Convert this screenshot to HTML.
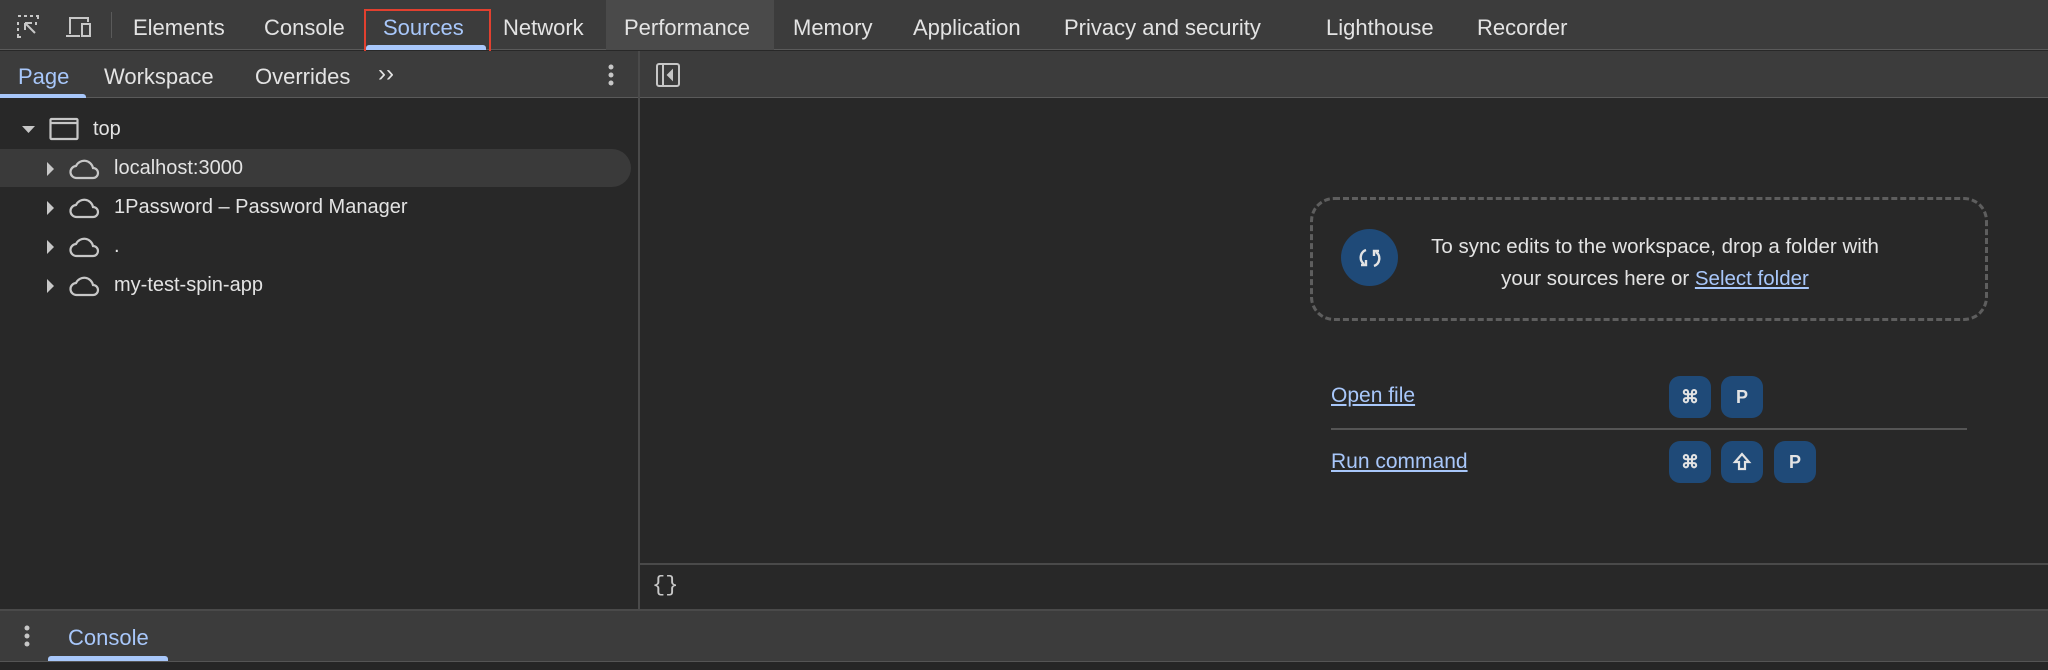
<!DOCTYPE html>
<html><head><meta charset="utf-8"><style>
*{margin:0;padding:0;box-sizing:border-box}
body{width:2048px;height:670px;background:#282828;font-family:"Liberation Sans",Arial,sans-serif;color:#e3e3e3;position:relative;overflow:hidden}
.a{position:absolute}
.tb{left:0;top:0;width:2048px;height:50px;background:#3c3c3c;border-bottom:1px solid #5a5a5a}
.t{position:absolute;top:15px;font-size:22px;color:#e3e3e3;white-space:nowrap}
.row{font-size:20px;white-space:nowrap}
.key{position:absolute;width:42px;height:42px;border-radius:11px;background:#1f4a78;color:#e3e3e3;font-size:18px;font-weight:bold;text-align:center;line-height:42px}
.lnk{color:#a8c7fa;text-decoration:underline;font-size:21px;position:absolute;white-space:nowrap}
</style></head><body>
<div class="a tb"></div>
<div class="a" style="left:606px;top:0;width:168px;height:50px;background:#4a4a4a"></div>
<svg class="a" style="left:16px;top:14px" width="26" height="26" viewBox="0 0 26 26" fill="none" stroke="#c7c7c7" stroke-width="2"><path d="M2 2h3M8 2h3M14 2h3M20 2h2v3M2 8v3M2 14v3M2 20v3h3M20 8v3M9 9l10 10M9 9h7M9 9v7"/></svg>
<svg class="a" style="left:64px;top:14px" width="30" height="26" viewBox="0 0 30 26" fill="none" stroke="#c7c7c7" stroke-width="2"><path d="M6 20V4h18v4M2 22h14M18 10h8v12h-8z"/></svg>
<div class="a" style="left:111px;top:12px;width:1px;height:26px;background:#5a5a5a"></div>
<div class="t" style="left:133px">Elements</div>
<div class="t" style="left:264px">Console</div>
<div class="t" style="left:383px;color:#a8c7fa">Sources</div>
<div class="a" style="left:366px;top:45px;width:120px;height:5px;border-radius:3px 3px 0 0;background:#a8c7fa"></div>
<div class="a" style="left:364px;top:9px;width:127px;height:47px;border:2px solid #e2402f"></div>
<div class="t" style="left:503px">Network</div>
<div class="t" style="left:624px">Performance</div>
<div class="t" style="left:793px">Memory</div>
<div class="t" style="left:913px">Application</div>
<div class="t" style="left:1064px">Privacy and security</div>
<div class="t" style="left:1326px">Lighthouse</div>
<div class="t" style="left:1477px">Recorder</div>

<div class="a" style="left:0;top:51px;width:2048px;height:47px;background:#3c3c3c;border-bottom:1px solid #5a5a5a"></div>
<div class="t" style="left:18px;top:64px;color:#a8c7fa">Page</div>
<div class="a" style="left:0;top:94px;width:86px;height:4px;background:#a8c7fa;border-radius:0 3px 0 0"></div>
<div class="t" style="left:104px;top:64px">Workspace</div>
<div class="t" style="left:255px;top:64px">Overrides</div>
<div class="t" style="left:378px;top:60px;font-size:24px">››</div>
<svg class="a" style="left:606px;top:63px" width="10" height="24"><circle cx="5" cy="4" r="2.5" fill="#c7c7c7"/><circle cx="5" cy="12" r="2.5" fill="#c7c7c7"/><circle cx="5" cy="20" r="2.5" fill="#c7c7c7"/></svg>
<div class="a" style="left:638px;top:51px;width:2px;height:558px;background:#4a4a4a"></div>
<svg class="a" style="left:655px;top:62px" width="26" height="26" viewBox="0 0 26 26" fill="none" stroke="#c7c7c7" stroke-width="2"><rect x="2" y="2" width="22" height="22" rx="2"/><path d="M8 2v22"/><path d="M17 9l-4 4 4 4z" fill="#c7c7c7"/></svg>

<!-- tree -->
<div class="a" style="left:0;top:149px;width:631px;height:38px;background:#3a3a3a;border-radius:0 19px 19px 0"></div>
<svg class="a" style="left:22px;top:124px" width="14" height="10"><path d="M0 2h13L6.5 9z" fill="#c7c7c7"/></svg>
<svg class="a" style="left:49px;top:117px" width="30" height="24" fill="none" stroke="#c7c7c7" stroke-width="2.2"><rect x="1.5" y="2" width="27" height="20" rx="1"/><path d="M1.5 6h27"/></svg>
<div class="a row" style="left:93px;top:118px">top</div>

<svg class="a" style="left:46px;top:161px" width="10" height="16"><path d="M1 1l7 7-7 7z" fill="#c7c7c7"/></svg>
<svg class="a" style="left:69px;top:156px" width="32" height="24" fill="none" stroke="#c7c7c7" stroke-width="2.2"><path d="M8 22a6 6 0 0 1-1-12 9 9 0 0 1 17 2 5 5 0 0 1 0 10z"/></svg>
<div class="a row" style="left:114px;top:157px">localhost:3000</div>

<svg class="a" style="left:46px;top:200px" width="10" height="16"><path d="M1 1l7 7-7 7z" fill="#c7c7c7"/></svg>
<svg class="a" style="left:69px;top:195px" width="32" height="24" fill="none" stroke="#c7c7c7" stroke-width="2.2"><path d="M8 22a6 6 0 0 1-1-12 9 9 0 0 1 17 2 5 5 0 0 1 0 10z"/></svg>
<div class="a row" style="left:114px;top:196px">1Password – Password Manager</div>

<svg class="a" style="left:46px;top:239px" width="10" height="16"><path d="M1 1l7 7-7 7z" fill="#c7c7c7"/></svg>
<svg class="a" style="left:69px;top:234px" width="32" height="24" fill="none" stroke="#c7c7c7" stroke-width="2.2"><path d="M8 22a6 6 0 0 1-1-12 9 9 0 0 1 17 2 5 5 0 0 1 0 10z"/></svg>
<div class="a row" style="left:114px;top:235px">.</div>

<svg class="a" style="left:46px;top:278px" width="10" height="16"><path d="M1 1l7 7-7 7z" fill="#c7c7c7"/></svg>
<svg class="a" style="left:69px;top:273px" width="32" height="24" fill="none" stroke="#c7c7c7" stroke-width="2.2"><path d="M8 22a6 6 0 0 1-1-12 9 9 0 0 1 17 2 5 5 0 0 1 0 10z"/></svg>
<div class="a row" style="left:114px;top:274px">my-test-spin-app</div>

<!-- right -->
<div class="a" style="left:1310px;top:197px;width:678px;height:124px;border:3px dashed #5e5e5e;border-radius:24px"></div>
<div class="a" style="left:1341px;top:229px;width:57px;height:57px;border-radius:50%;background:#1f4a78"></div>
<svg class="a" style="left:1357px;top:245px" width="26" height="26" viewBox="0 0 26 26" fill="none" stroke="#e3e3e3" stroke-width="2.4"><path d="M9 5a8 8 0 0 0-2 14M17 21a8 8 0 0 0 2-14"/><path d="M4 20h5v-5M22 6h-5v5"/></svg>
<div class="a" style="left:1405px;top:231px;width:500px;text-align:center;font-size:20.5px;line-height:32px">To sync edits to the workspace, drop a folder with<br>your sources here or <span style="color:#a8c7fa;text-decoration:underline">Select folder</span></div>
<div class="lnk" style="left:1331px;top:384px">Open file</div>
<div class="key" style="left:1669px;top:376px">⌘</div>
<div class="key" style="left:1721px;top:376px">P</div>
<div class="a" style="left:1331px;top:428px;width:636px;height:2px;background:#555"></div>
<div class="lnk" style="left:1331px;top:450px">Run command</div>
<div class="key" style="left:1669px;top:441px">⌘</div>
<div class="key" style="left:1721px;top:441px"><svg width="20" height="20" viewBox="0 0 20 20" style="margin-top:11px" fill="none" stroke="#e3e3e3" stroke-width="2.2"><path d="M10 2L3 10h4v7h6v-7h4z"/></svg></div>
<div class="key" style="left:1774px;top:441px">P</div>

<div class="a" style="left:640px;top:563px;width:1408px;height:2px;background:#4a4a4a"></div>
<div class="a" style="left:652px;top:573px;font-size:22px;font-family:'Liberation Mono',monospace;color:#c7c7c7">{}</div>

<!-- drawer -->
<div class="a" style="left:0;top:609px;width:2048px;height:53px;background:#3c3c3c;border-top:2px solid #4a4a4a"></div>
<svg class="a" style="left:22px;top:624px" width="10" height="24"><circle cx="5" cy="4" r="2.5" fill="#c7c7c7"/><circle cx="5" cy="12" r="2.5" fill="#c7c7c7"/><circle cx="5" cy="20" r="2.5" fill="#c7c7c7"/></svg>
<div class="t" style="left:68px;top:625px;color:#a8c7fa">Console</div>
<div class="a" style="left:48px;top:656px;width:120px;height:5px;background:#a8c7fa;border-radius:3px 3px 0 0"></div>
<div class="a" style="left:0;top:661px;width:2048px;height:9px;background:#262626;border-top:1px solid #555"></div>
</body></html>
